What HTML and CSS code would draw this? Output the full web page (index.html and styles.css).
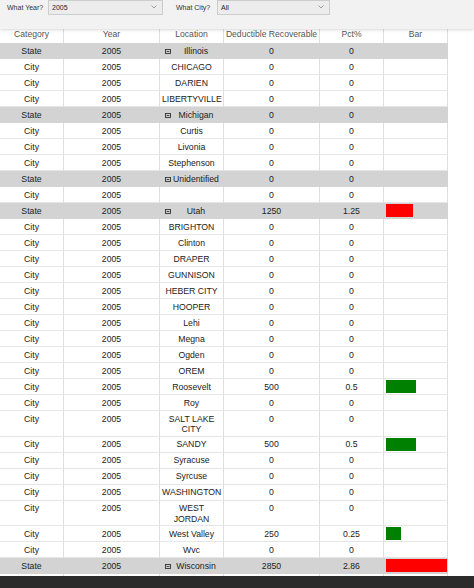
FILE: index.html
```html
<!DOCTYPE html>
<html>
<head>
<meta charset="utf-8">
<link rel="stylesheet" href="styles.css">
</head>
<body>
<div class="topbar">
  <div class="field">
    <span class="label">What Year?</span>
    <div class="select year"><span>2005</span><svg class="chev" width="6" height="4" viewBox="0 0 6 4"><path d="M0.5 0.5 L3 3 L5.5 0.5" fill="none" stroke="#888" stroke-width="0.8"/></svg></div>
  </div>
  <div class="field">
    <span class="label">What City?</span>
    <div class="select city"><span>All</span><svg class="chev" width="6" height="4" viewBox="0 0 6 4"><path d="M0.5 0.5 L3 3 L5.5 0.5" fill="none" stroke="#888" stroke-width="0.8"/></svg></div>
  </div>
</div>
<div class="main">
<table class="grid">
  <colgroup><col class="c64"><col class="c96"><col class="c64"><col class="c96"><col class="c64"><col class="c64"></colgroup>
  <thead>
    <tr><th>Category</th><th>Year</th><th>Location</th><th>Deductible Recoverable</th><th>Pct%</th><th>Bar</th></tr>
  </thead>
  <tbody>
    <tr class="state"><td>State</td><td>2005</td><td><div class="loc"><svg class="tog" width="6" height="5" viewBox="0 0 6 5"><rect x="0.5" y="0.5" width="5" height="4" fill="none" stroke="#333" stroke-width="0.9"/><path d="M1.6 2.5 H4.4" stroke="#333" stroke-width="0.9"/></svg><span>Illinois</span></div></td><td>0</td><td>0</td><td></td></tr>
    <tr><td>City</td><td>2005</td><td>CHICAGO</td><td>0</td><td>0</td><td></td></tr>
    <tr><td>City</td><td>2005</td><td>DARIEN</td><td>0</td><td>0</td><td></td></tr>
    <tr><td>City</td><td>2005</td><td>LIBERTYVILLE</td><td>0</td><td>0</td><td></td></tr>
    <tr class="state"><td>State</td><td>2005</td><td><div class="loc"><svg class="tog" width="6" height="5" viewBox="0 0 6 5"><rect x="0.5" y="0.5" width="5" height="4" fill="none" stroke="#333" stroke-width="0.9"/><path d="M1.6 2.5 H4.4" stroke="#333" stroke-width="0.9"/></svg><span>Michigan</span></div></td><td>0</td><td>0</td><td></td></tr>
    <tr><td>City</td><td>2005</td><td>Curtis</td><td>0</td><td>0</td><td></td></tr>
    <tr><td>City</td><td>2005</td><td>Livonia</td><td>0</td><td>0</td><td></td></tr>
    <tr><td>City</td><td>2005</td><td>Stephenson</td><td>0</td><td>0</td><td></td></tr>
    <tr class="state"><td>State</td><td>2005</td><td><div class="loc"><svg class="tog" width="6" height="5" viewBox="0 0 6 5"><rect x="0.5" y="0.5" width="5" height="4" fill="none" stroke="#333" stroke-width="0.9"/><path d="M1.6 2.5 H4.4" stroke="#333" stroke-width="0.9"/></svg><span>Unidentified</span></div></td><td>0</td><td>0</td><td></td></tr>
    <tr><td>City</td><td>2005</td><td></td><td>0</td><td>0</td><td></td></tr>
    <tr class="state"><td>State</td><td>2005</td><td><div class="loc"><svg class="tog" width="6" height="5" viewBox="0 0 6 5"><rect x="0.5" y="0.5" width="5" height="4" fill="none" stroke="#333" stroke-width="0.9"/><path d="M1.6 2.5 H4.4" stroke="#333" stroke-width="0.9"/></svg><span>Utah</span></div></td><td>1250</td><td>1.25</td><td class="barcell"><div class="bar red" style="width:27px"></div></td></tr>
    <tr><td>City</td><td>2005</td><td>BRIGHTON</td><td>0</td><td>0</td><td></td></tr>
    <tr><td>City</td><td>2005</td><td>Clinton</td><td>0</td><td>0</td><td></td></tr>
    <tr><td>City</td><td>2005</td><td>DRAPER</td><td>0</td><td>0</td><td></td></tr>
    <tr><td>City</td><td>2005</td><td>GUNNISON</td><td>0</td><td>0</td><td></td></tr>
    <tr><td>City</td><td>2005</td><td>HEBER CITY</td><td>0</td><td>0</td><td></td></tr>
    <tr><td>City</td><td>2005</td><td>HOOPER</td><td>0</td><td>0</td><td></td></tr>
    <tr><td>City</td><td>2005</td><td>Lehi</td><td>0</td><td>0</td><td></td></tr>
    <tr><td>City</td><td>2005</td><td>Megna</td><td>0</td><td>0</td><td></td></tr>
    <tr><td>City</td><td>2005</td><td>Ogden</td><td>0</td><td>0</td><td></td></tr>
    <tr><td>City</td><td>2005</td><td>OREM</td><td>0</td><td>0</td><td></td></tr>
    <tr><td>City</td><td>2005</td><td>Roosevelt</td><td>500</td><td>0.5</td><td class="barcell"><div class="bar green" style="width:30px"></div></td></tr>
    <tr><td>City</td><td>2005</td><td>Roy</td><td>0</td><td>0</td><td></td></tr>
    <tr class="two"><td>City</td><td>2005</td><td>SALT LAKE CITY</td><td>0</td><td>0</td><td></td></tr>
    <tr><td>City</td><td>2005</td><td>SANDY</td><td>500</td><td>0.5</td><td class="barcell"><div class="bar green" style="width:30px"></div></td></tr>
    <tr><td>City</td><td>2005</td><td>Syracuse</td><td>0</td><td>0</td><td></td></tr>
    <tr><td>City</td><td>2005</td><td>Syrcuse</td><td>0</td><td>0</td><td></td></tr>
    <tr><td>City</td><td>2005</td><td>WASHINGTON</td><td>0</td><td>0</td><td></td></tr>
    <tr class="two"><td>City</td><td>2005</td><td>WEST JORDAN</td><td>0</td><td>0</td><td></td></tr>
    <tr><td>City</td><td>2005</td><td>West Valley</td><td>250</td><td>0.25</td><td class="barcell"><div class="bar green" style="width:15px"></div></td></tr>
    <tr><td>City</td><td>2005</td><td>Wvc</td><td>0</td><td>0</td><td></td></tr>
    <tr class="state"><td>State</td><td>2005</td><td><div class="loc"><svg class="tog" width="6" height="5" viewBox="0 0 6 5"><rect x="0.5" y="0.5" width="5" height="4" fill="none" stroke="#333" stroke-width="0.9"/><path d="M1.6 2.5 H4.4" stroke="#333" stroke-width="0.9"/></svg><span>Wisconsin</span></div></td><td>2850</td><td>2.86</td><td class="barcell"><div class="bar red" style="width:61px"></div></td></tr>
    <tr class="filler"><td></td><td></td><td></td><td></td><td></td><td></td></tr>
  </tbody>
</table>
</div>
<div class="footer"></div>
</body>
</html>
```
FILE: styles.css
```css
html, body {
  margin: 0;
  padding: 0;
}
body {
  height: 588px;
  overflow: hidden;
  display: flex;
  flex-direction: column;
  background: #fff;
  font-family: "Liberation Sans", Arial, sans-serif;
  color: #222;
}
.topbar {
  position: relative;
  z-index: 1;
  flex: none;
  height: 29px;
  background: #f2f2f2;
  box-shadow: 0 1px 3px rgba(0, 0, 0, 0.16);
  display: flex;
  align-items: flex-start;
  gap: 13px;
}
.field {
  display: flex;
  align-items: center;
  height: 15px;
}
.label {
  flex: none;
  box-sizing: border-box;
  font-size: 7px;
  color: #333;
  padding-left: 7px;
  width: 48px;
  white-space: nowrap;
}
.field + .field .label {
  padding-left: 0;
  width: 41px;
}
.select {
  box-sizing: border-box;
  height: 15px;
  margin-top: -1px;
  border: 1px solid #cdcdcd;
  background: #ececec;
  display: flex;
  align-items: center;
  justify-content: space-between;
  padding: 0 5px 0 3px;
  font-size: 7px;
  color: #222;
}
.select.year { width: 115px; }
.select.city { width: 113px; }
.chev { display: block; }
.main {
  flex: 1;
  overflow: hidden;
  margin-top: -3px;
}
.footer {
  flex: none;
  height: 12px;
  background: #2b2b2b;
}
.grid {
  border-collapse: separate;
  border-spacing: 0;
  table-layout: fixed;
  width: 448px;
  font-size: 8.7px;
}
.c64 { width: 64px; }
.c96 { width: 96px; }
.grid th {
  height: 17px;
  box-sizing: border-box;
  padding: 0 1px 3px;
  font-weight: normal;
  font-size: 8.6px;
  line-height: 12px;
  color: #555;
  vertical-align: bottom;
  white-space: nowrap;
  overflow: hidden;
  border-right: 1px solid #dedede;
}
.grid tbody tr {
  height: 16px;
}
.grid td {
  padding: 2.5px 2px 1px;
  line-height: 10.5px;
  vertical-align: top;
  text-align: center;
  border-right: 1px solid #dedede;
  border-bottom: 1px solid #e6e6e6;
  overflow: hidden;
}
.grid tr.state td {
  background: #d3d3d3;
  border-right-color: #d3d3d3;
  border-bottom-color: #d3d3d3;
}
.grid tr.two td:nth-child(3) {
  padding-left: 8px;
  padding-right: 8px;
}
.loc {
  display: flex;
  align-items: center;
}
.tog {
  flex: none;
  margin-left: 3px;
  margin-top: 1px;
}
.loc span {
  flex: 1;
  text-align: center;
  white-space: nowrap;
}
.grid td.barcell {
  padding: 1px 0 0 2px;
}
.bar {
  height: 13px;
}
.bar.red { background: #ff0000; }
.bar.green { background: #008000; }
```
